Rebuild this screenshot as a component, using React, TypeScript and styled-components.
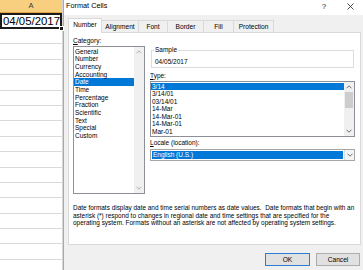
import React from "react"
import styled, { createGlobalStyle } from "styled-components"

const GlobalStyle = createGlobalStyle`
  html, body { margin: 0; padding: 0; }
  body {
    width: 363px;
    height: 270px;
    overflow: hidden;
    background: #fff;
    font-family: "Liberation Sans", Arial, sans-serif;
  }
  * { box-sizing: border-box; }
`

const Screen = styled.div`
  display: flex;
  width: 363px;
  height: 270px;
  overflow: hidden;
`

/* ---- spreadsheet behind the dialog ---- */

const Sheet = styled.div`
  width: 63px;
  flex: none;
  display: flex;
  flex-direction: column;
  border-right: 1px solid #d4d4d4;
  background: #fff;
`

const ColumnHeader = styled.div`
  height: 13px;
  flex: none;
  background: #f8cf7e;
  border-bottom: 1px solid #e0a445;
  color: #3a3a3a;
  font-size: 7.5px;
  line-height: 12px;
  text-align: center;
`

const ActiveCell = styled.div`
  position: relative;
  height: 16px;
  flex: none;
  border: 2px solid #1b1b1b;
  font-size: 11.4px;
  line-height: 12px;
  padding-left: 1px;
  color: #000;
  white-space: nowrap;
`

const FillHandle = styled.span`
  position: absolute;
  right: -4px;
  bottom: -4px;
  width: 5px;
  height: 5px;
  background: #1b1b1b;
  border: 1px solid #fff;
`

const GridRow = styled.div`
  height: 15.4px;
  flex: none;
  border-bottom: 1px solid #dadada;
`

/* ---- dialog ---- */

const Dialog = styled.div`
  flex: 1;
  min-width: 0;
  display: flex;
  flex-direction: column;
  background: #f0f0f0;
  border-left: 1px solid #7fb4e8;
  color: #000;
`

const TitleBar = styled.div`
  height: 15px;
  flex: none;
  display: flex;
  align-items: flex-start;
  padding: 1px 0 0 2px;
  background: #fff;
`

const Title = styled.span`
  flex: 1;
  font-size: 7.3px;
  line-height: 10px;
`

const TitleButton = styled.div`
  width: 26px;
  height: 10px;
  display: flex;
  align-items: center;
  justify-content: center;
  font-size: 8px;
  color: #222;
`

const TabStrip = styled.div`
  height: 17px;
  flex: none;
  display: flex;
  align-items: flex-end;
  padding: 0 0 0 5px;
`

const Tab = styled.div<{ $active?: boolean; $w: number }>`
  position: relative;
  z-index: ${(p) => (p.$active ? 1 : 0)};
  width: ${(p) => p.$w}px;
  height: ${(p) => (p.$active ? 15 : 12)}px;
  margin-left: -1px;
  margin-bottom: ${(p) => (p.$active ? -1 : 0)}px;
  border: 1px solid #d9d9d9;
  border-bottom: none;
  background: ${(p) => (p.$active ? "#fff" : "#f0f0f0")};
  font-size: 6.6px;
  line-height: ${(p) => (p.$active ? 12 : 11)}px;
  text-align: center;
`

const Panel = styled.div`
  height: 213px;
  flex: none;
  margin: 0 2px 0 4px;
  padding: 4px 5px 0 4px;
  border: 1px solid #d9d9d9;
  background: #fff;
  font-size: 6.5px;
  overflow: hidden;
`

const Columns = styled.div`
  display: grid;
  grid-template-columns: 72px 1fr;
  column-gap: 5px;
  align-items: start;
`

const Column = styled.div`
  display: flex;
  flex-direction: column;
  min-width: 0;
`

const Label = styled.div<{ $gap?: number }>`
  line-height: 8px;
  margin-top: ${(p) => p.$gap ?? 0}px;
  white-space: nowrap;
`

const U = styled.span`
  text-decoration: underline;
`

const ListBox = styled.div<{ $h: number }>`
  height: ${(p) => p.$h}px;
  margin-top: 1px;
  display: flex;
  border: 1px solid #8c8f96;
  background: #fff;
`

const Items = styled.div`
  flex: 1;
  padding-top: 0.5px;
  overflow: hidden;
`

const Item = styled.div<{ $selected?: boolean; $row: number }>`
  height: ${(p) => p.$row}px;
  line-height: ${(p) => p.$row}px;
  padding-left: 1px;
  white-space: nowrap;
  background: ${(p) => (p.$selected ? "#0078d7" : "transparent")};
  color: ${(p) => (p.$selected ? "#fff" : "#000")};
`

const ScrollBar = styled.div`
  width: 10px;
  flex: none;
  display: flex;
  flex-direction: column;
  background: #f0f0f0;
`

const ArrowBox = styled.div`
  height: 10px;
  flex: none;
  display: flex;
  align-items: center;
  justify-content: center;
`

const Thumb = styled.div`
  height: 16px;
  margin: 0 1px;
  background: #cdcdcd;
`

const Spacer = styled.div`
  flex: 1;
`

const GroupBox = styled.fieldset`
  margin: 9px 1px 0 1px;
  padding: 0 0 1px 2px;
  border: 1px solid #dcdcdc;
  min-width: 0;
`

const Legend = styled.legend`
  padding: 0 1px;
  line-height: 8px;
`

const SampleValue = styled.div`
  padding: 4px 0 0 1px;
  line-height: 8px;
`

const Combo = styled.div`
  height: 12px;
  margin-top: 2px;
  display: flex;
  border: 1px solid #a6a6a6;
  background: #fff;
`

const ComboValue = styled.div`
  flex: 1;
  margin: 1px;
  padding-left: 1px;
  line-height: 8px;
  background: #0078d7;
  color: #fff;
`

const ComboButton = styled.div`
  width: 10px;
  flex: none;
  display: flex;
  align-items: center;
  justify-content: center;
  border-left: 1px solid #dcdcdc;
  background: #f4f4f4;
`

const Description = styled.p`
  margin: 10px 0 0 0;
  font-size: 6.45px;
  line-height: 7.5px;
  white-space: nowrap;
`

const Footer = styled.div`
  display: flex;
  justify-content: flex-end;
  gap: 6px;
  padding: 8px 3px 0 0;
`

const Button = styled.div<{ $default?: boolean; $w: number }>`
  width: ${(p) => p.$w}px;
  height: 13px;
  border: 1px solid ${(p) => (p.$default ? "#2b7cd3" : "#adadad")};
  background: #e1e1e1;
  font-size: 6.6px;
  line-height: 11px;
  text-align: center;
`

const Chevron: React.FC<{ up?: boolean; color: string }> = ({ up, color }) => (
  <svg width="6" height="4" viewBox="0 0 6 4">
    <path d={up ? "M0.5 3.3 L3 0.8 L5.5 3.3" : "M0.5 0.7 L3 3.2 L5.5 0.7"} fill="none" stroke={color} strokeWidth="0.9" />
  </svg>
)

const CloseIcon = () => (
  <svg width="7" height="7" viewBox="0 0 7 7">
    <path d="M0.5 0.5 L6.5 6.5 M6.5 0.5 L0.5 6.5" stroke="#222" strokeWidth="0.8" />
  </svg>
)

const tabs = [
  { name: "Number", w: 34 },
  { name: "Alignment", w: 38 },
  { name: "Font", w: 30 },
  { name: "Border", w: 37 },
  { name: "Fill", w: 31 },
  { name: "Protection", w: 41 },
]

const categories = [
  "General",
  "Number",
  "Currency",
  "Accounting",
  "Date",
  "Time",
  "Percentage",
  "Fraction",
  "Scientific",
  "Text",
  "Special",
  "Custom",
]

const types = ["3/14", "3/14/01", "03/14/01", "14-Mar", "14-Mar-01", "14-Mar-01", "Mar-01"]

const App: React.FC = () => {
  return (
    <>
      <GlobalStyle />
      <Screen>
        <Sheet>
          <ColumnHeader>A</ColumnHeader>
          <ActiveCell>
            04/05/2017
            <FillHandle />
          </ActiveCell>
          {Array.from({ length: 16 }).map((_, i) => (
            <GridRow key={i} />
          ))}
        </Sheet>

        <Dialog>
          <TitleBar>
            <Title>Format Cells</Title>
            <TitleButton>?</TitleButton>
            <TitleButton>
              <CloseIcon />
            </TitleButton>
          </TitleBar>

          <TabStrip>
            {tabs.map((t, i) => (
              <Tab key={t.name} $w={t.w} $active={i === 0}>
                {t.name}
              </Tab>
            ))}
          </TabStrip>

          <Panel>
            <Columns>
              <Column>
                <Label>
                  <U>C</U>ategory:
                </Label>
                <ListBox $h={148}>
                  <Items>
                    {categories.map((c) => (
                      <Item key={c} $row={7.7} $selected={c === "Date"}>
                        {c}
                      </Item>
                    ))}
                  </Items>
                  <ScrollBar>
                    <ArrowBox>
                      <Chevron up color="#a8a8a8" />
                    </ArrowBox>
                    <Spacer />
                    <ArrowBox>
                      <Chevron color="#a8a8a8" />
                    </ArrowBox>
                  </ScrollBar>
                </ListBox>
              </Column>

              <Column>
                <GroupBox>
                  <Legend>Sample</Legend>
                  <SampleValue>04/05/2017</SampleValue>
                </GroupBox>
                <Label $gap={4}>
                  <U>T</U>ype:
                </Label>
                <ListBox $h={56}>
                  <Items>
                    {types.map((t, i) => (
                      <Item key={i} $row={7.6} $selected={i === 0}>
                        {t}
                      </Item>
                    ))}
                  </Items>
                  <ScrollBar>
                    <ArrowBox>
                      <Chevron up color="#606060" />
                    </ArrowBox>
                    <Thumb />
                    <Spacer />
                    <ArrowBox>
                      <Chevron color="#606060" />
                    </ArrowBox>
                  </ScrollBar>
                </ListBox>
                <Label $gap={2}>
                  <U>L</U>ocale (location):
                </Label>
                <Combo>
                  <ComboValue>English (U.S.)</ComboValue>
                  <ComboButton>
                    <Chevron color="#606060" />
                  </ComboButton>
                </Combo>
              </Column>
            </Columns>

            <Description>
              Date formats display date and time serial numbers as date values.&nbsp; Date formats that begin with an
              <br />
              asterisk (*) respond to changes in regional date and time settings that are specified for the
              <br />
              operating system. Formats without an asterisk are not affected by operating system settings.
            </Description>
          </Panel>

          <Footer>
            <Button $default $w={45}>
              OK
            </Button>
            <Button $w={44}>Cancel</Button>
          </Footer>
        </Dialog>
      </Screen>
    </>
  )
}

export default App
